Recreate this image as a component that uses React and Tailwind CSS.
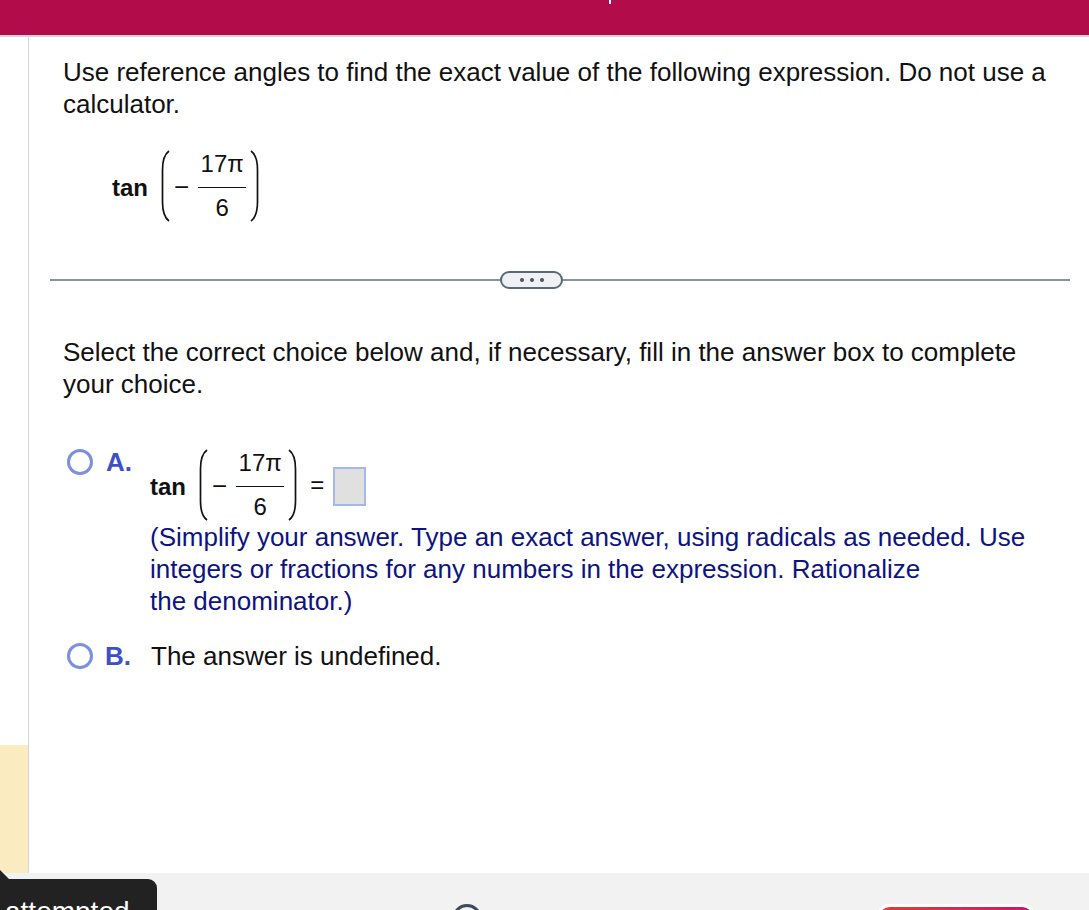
import React from 'react'

const Paren = ({ side = 'left', h = 72 }) => (
  <svg width="10" height={h} viewBox={`0 0 10 ${h}`} className="shrink-0">
    {side === 'left' ? (
      <path d={`M9 1 C3.5 5 2.5 12 2.5 20 L2.5 ${h - 20} C2.5 ${h - 12} 3.5 ${h - 5} 9 ${h - 1}`} fill="none" stroke="#111" strokeWidth="1.7" />
    ) : (
      <path d={`M1 1 C6.5 5 7.5 12 7.5 20 L7.5 ${h - 20} C7.5 ${h - 12} 6.5 ${h - 5} 1 ${h - 1}`} fill="none" stroke="#111" strokeWidth="1.7" />
    )}
  </svg>
)

// tan ( - 17π/6 )
const TanExpr = ({ box = false }) => (
  <div className="flex items-center h-[72px] text-[#111]">
    <span className="font-bold text-[24px] leading-[28px] mr-[12px] mt-[3px]">tan</span>
    <Paren side="left" />
    <span className="text-[26px] leading-[28px] ml-[4px] mr-[9px] mt-[2px]">−</span>
    <div className="flex flex-col items-center w-[48px]">
      <span className="text-[24px] leading-[26px]">17π</span>
      <div className="w-full h-[1.5px] bg-[#111] mt-[10px]" />
      <span className="text-[24px] leading-[26px] mt-[7px]">6</span>
    </div>
    <span className="w-[4px]" />
    <Paren side="right" />
    {box && (
      <>
        <span className="text-[24px] ml-[12px] mr-[9px]">=</span>
        <div className="w-[33px] h-[39px] bg-[#e0e0e0] border-2 border-[#a3b8ec] mt-[2px]" />
      </>
    )}
  </div>
)

const Radio = () => (
  <div className="w-[26px] h-[26px] rounded-full border-[3px] border-[#7d8fe0] shrink-0" />
)

export default function App() {
  return (
    <div
      className="w-[1089px] h-[910px] overflow-hidden relative bg-white flex flex-col"
      style={{ fontFamily: '"Liberation Sans", Arial, sans-serif' }}
    >
      {/* top bar */}
      <div className="h-[37px] shrink-0 bg-[#b20c4a] border-b-2 border-[#d2d2de] relative">
        <div className="absolute left-[609px] top-0 w-[2px] h-[4px] bg-white" />
      </div>

      <div className="flex flex-1 min-h-0">
        {/* left strip */}
        <div className="w-[29px] shrink-0 border-r border-[#d0d4e4] flex flex-col">
          <div className="h-[708px]" />
          <div className="flex-1 bg-[#faecc0]" />
        </div>

        {/* main content */}
        <div className="flex-1 pt-[19px] text-[#111]">
          <p className="pl-[34px] pr-[30px] text-[26px] leading-[32px]">
            Use reference angles to find the exact value of the following expression. Do not use a calculator.
          </p>

          <div className="pl-[83px] mt-[30px]">
            <TanExpr />
          </div>

          <div className="relative mt-[49px] ml-[21px] mr-[19px] h-[18px] flex items-center">
            <div className="w-full h-[1.5px] bg-[#8a93a3]" />
            <div className="absolute left-[450px] top-0 w-[63px] h-[18px] rounded-full border-2 border-[#5a6878] bg-[#eff1f4] flex items-center justify-center gap-[6px]">
              <span className="w-[4px] h-[4px] rounded-full bg-[#4a5462]" />
              <span className="w-[4px] h-[4px] rounded-full bg-[#4a5462]" />
              <span className="w-[4px] h-[4px] rounded-full bg-[#4a5462]" />
            </div>
          </div>

          <p className="pl-[34px] pr-[30px] mt-[47px] text-[26px] leading-[32px]">
            Select the correct choice below and, if necessary, fill in the answer box to complete your choice.
          </p>

          {/* option A */}
          <div className="flex mt-[49px] pl-[38px]">
            <Radio />
            <span className="font-bold text-[26px] text-[#3d50c8] leading-[26px] ml-[13px] w-[44px] shrink-0">A.</span>
            <div className="flex flex-col">
              <TanExpr box />
              <p className="text-[26px] leading-[32px] text-[#0d1480] whitespace-nowrap">
                (Simplify your answer. Type an exact answer, using radicals as needed. Use
                <br />
                integers or fractions for any numbers in the expression. Rationalize
                <br />
                the denominator.)
              </p>
            </div>
          </div>

          {/* option B */}
          <div className="flex items-center mt-[23px] pl-[38px] leading-[32px]">
            <Radio />
            <span className="font-bold text-[26px] text-[#3d50c8] ml-[12px] w-[46px] shrink-0">B.</span>
            <span className="text-[26px]">The answer is undefined.</span>
          </div>
        </div>
      </div>

      {/* bottom bar */}
      <div className="h-[37px] shrink-0 bg-[#f2f2f2] relative">
        <div className="absolute left-[452px] top-[31px] w-[30px] h-[30px] rounded-full border-[3px] border-[#3d4a5a]" />
        <div className="absolute left-[876px] top-[31px] w-[160px] h-[30px] rounded-[14px] border-[3px] border-white bg-gradient-to-r from-[#d8402e] to-[#c8106a]" />
      </div>

      {/* tooltip */}
      <div className="absolute left-0 top-[879px] w-[157px] h-[40px] bg-[#222] rounded-tr-[9px] overflow-hidden">
        <span className="absolute left-[5px] top-[18px] text-white text-[28px] leading-[30px]">attempted</span>
      </div>
      <div className="absolute left-0 top-[870px] w-0 h-0 border-t-[9px] border-t-transparent border-l-[9px] border-l-[#222]" />
    </div>
  )
}
